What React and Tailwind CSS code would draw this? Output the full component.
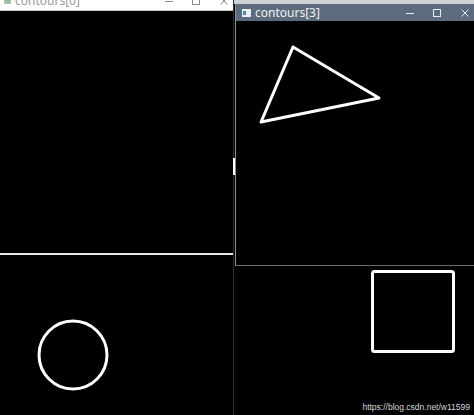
import React from "react";

const font = { fontFamily: '"Noto Sans", "Liberation Sans", sans-serif' };

const Controls = ({ dark }) => {
  const c = dark ? "#e6ecf2" : "#8a8a8a";
  return (
    <div className="flex items-center h-full">
      <svg width="10" height="10" viewBox="0 0 10 10" className="mr-[17px]">
        <line x1="1" y1="5.5" x2="9" y2="5.5" stroke={c} strokeWidth="1" />
      </svg>
      <svg width="10" height="10" viewBox="0 0 10 10" className="mr-[18px]">
        <rect x="1.5" y="1.5" width="7" height="7" fill="none" stroke={c} strokeWidth="1" />
      </svg>
      <svg width="10" height="10" viewBox="0 0 10 10" className="mr-[4px]">
        <path d="M1.5 1.5 L8.5 8.5 M8.5 1.5 L1.5 8.5" stroke={c} strokeWidth="1" />
      </svg>
    </div>
  );
};

export default function App() {
  return (
    <div className="relative w-[474px] h-[415px] bg-black overflow-hidden" style={font}>
      {/* contours[0] window, title bar mostly scrolled off the top */}
      <div className="absolute left-0 top-[-9px] w-[233px] h-[264px] flex flex-col">
        <div className="h-[20px] bg-white flex items-center justify-between pl-[4px] border-b border-[#c9c9c9]">
          <div className="flex items-center gap-[4px]">
            <div className="w-[7px] h-[7px] bg-[#8fc0a6] border border-[#b4c7bd]" />
            <span className="text-[12px] text-[#9a9a9a] leading-none">contours[0]</span>
          </div>
          <Controls />
        </div>
        <div className="flex-1 bg-black border-b-2 border-[#e8e8e8]" />
      </div>

      {/* contours[1] lower left */}
      <div className="absolute left-0 top-[255px] w-[233px] h-[160px]">
        <svg width="233" height="160">
          <circle cx="73" cy="100" r="34" fill="none" stroke="#fff" strokeWidth="3" />
        </svg>
      </div>

      {/* divider line between windows */}
      <div className="absolute left-[233px] top-0 w-px h-[415px] bg-[#2e2e2e]" />
      <div className="absolute left-[233px] top-[158px] w-[2px] h-[17px] bg-white" />

      {/* strip of a window behind, above contours[3] */}
      <div className="absolute left-[234px] top-0 w-[240px] h-[4px] bg-[#cfd2d4]" />

      {/* contours[2] lower right */}
      <div className="absolute left-[236px] top-[266px] w-[238px] h-[149px]">
        <svg width="238" height="149">
          <rect x="136.5" y="5.5" width="81" height="80" rx="2" fill="none" stroke="#fff" strokeWidth="3" />
        </svg>
        <span className="absolute right-[4px] bottom-[4px] text-[8.5px] leading-none text-[#d8d8d8]" style={{ fontFamily: '"Liberation Sans", Arial, sans-serif' }}>
          https://blog.csdn.net/w11599
        </span>
      </div>

      {/* contours[3] window */}
      <div className="absolute left-[235px] top-[4px] w-[239px] h-[262px] flex flex-col border-l border-[#8a929a]">
        <div className="h-[17px] bg-[#5d6c7c] flex items-center justify-between pl-[6px]">
          <div className="flex items-center gap-[4px]">
            <div className="w-[9px] h-[8px] bg-[#e9eef2] flex items-center pl-[1px]">
              <div className="w-[3px] h-[4px] bg-[#4b8bb0]" />
            </div>
            <span className="text-[12px] text-[#eef2f6] leading-none">contours[3]</span>
          </div>
          <Controls dark />
        </div>
        <div className="flex-1 bg-black border-b border-[#6b6b6b]">
          <svg width="238" height="244">
            <polygon points="57,26 143,77 25,101" fill="none" stroke="#fff" strokeWidth="3" strokeLinejoin="round" />
          </svg>
        </div>
      </div>
    </div>
  );
}
